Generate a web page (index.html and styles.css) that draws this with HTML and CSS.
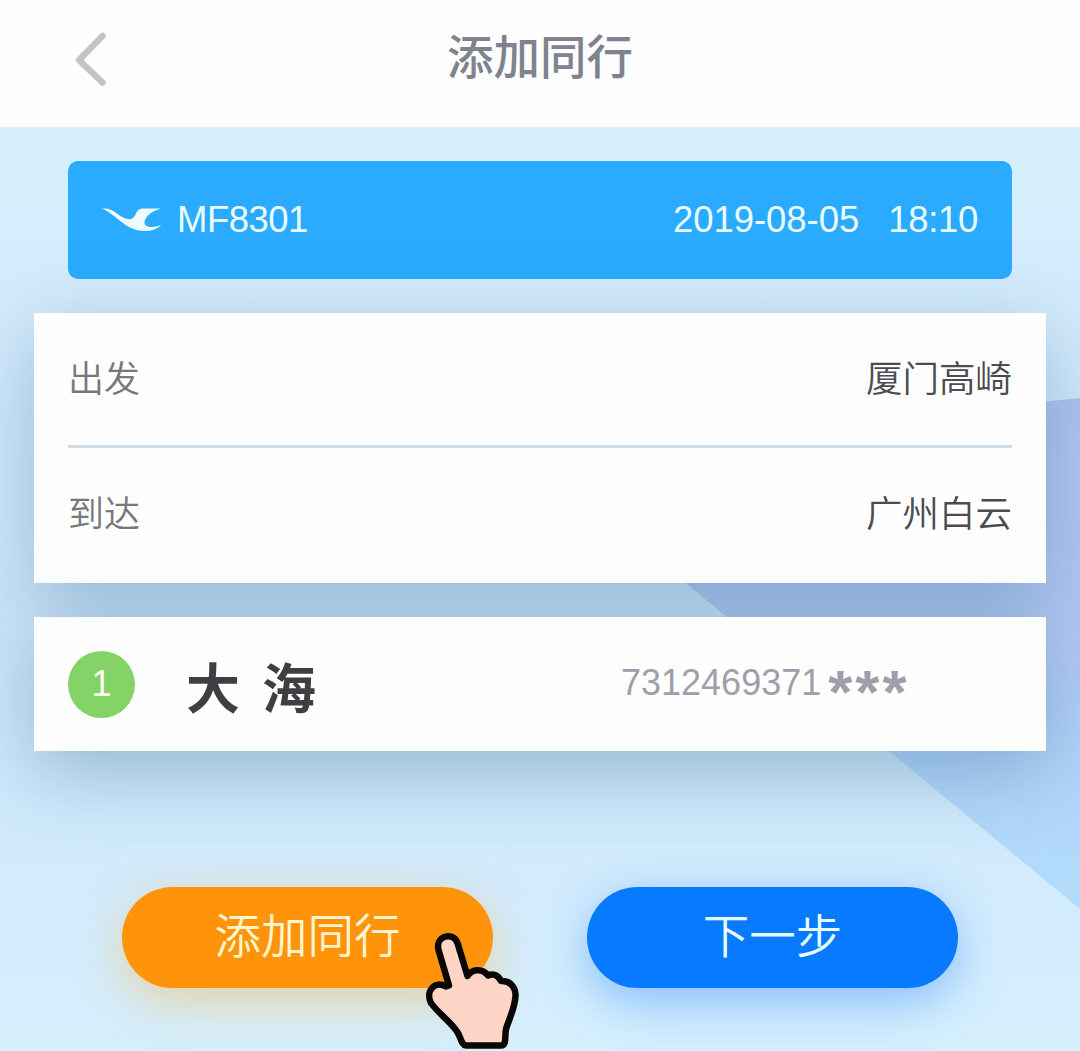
FILE: index.html
```html
<!DOCTYPE html>
<html lang="zh-CN">
<head>
<meta charset="utf-8">
<title>添加同行</title>
<link rel="stylesheet" href="styles.css">
</head>
<body>
<header class="topbar">
  <svg class="back" viewBox="0 0 34 56" width="34" height="56"><path d="M28.500 5 5 29 28.500 51.500" fill="none" stroke="#c4c4c5" stroke-width="6.500" stroke-linecap="round" stroke-linejoin="round"/></svg>
  <h1 class="title">添加同行</h1>
</header>
<main class="page">
  <svg class="backdrop" viewBox="0 0 1080 924" width="1080" height="924">
    <defs><linearGradient id="band" gradientUnits="userSpaceOnUse" x1="0" y1="271" x2="0" y2="780">
      <stop offset="0" stop-color="#b0c4ef"/><stop offset=".5" stop-color="#b1c9f3"/><stop offset=".72" stop-color="#b1d5f9"/><stop offset="1" stop-color="#b2dcfc"/>
    </linearGradient></defs>
    <path d="M1080 271Q780 300 600 386L682 453 890 625 1080 782Z" fill="url(#band)"/>
  </svg>
  <section class="flight">
    <svg class="bird" viewBox="0 0 60 26" width="60" height="26"><path d="M0 1.500C8 1 11 3.500 17 8C22 11.500 28 14 31.500 10.500C35 7 34 2 40 1.500H59C53 3.500 49 5 46 8.500C43 12 41 16 44 18.500C48 21 54 20 59 18C53 25 39 26 28 20.500C18 15.500 11 6 0 1.500Z" fill="#effcff"/></svg>
    <span class="number">MF8301</span>
    <span class="date">2019-08-05</span>
    <span class="time">18:10</span>
  </section>
  <section class="card route">
    <div class="row"><span class="label">出发</span><span class="value">厦门高崎</span></div>
    <div class="row"><span class="label">到达</span><span class="value">广州白云</span></div>
  </section>
  <section class="card passenger">
    <span class="badge">1</span>
    <span class="name">大海</span>
    <span class="ticket">7312469371<b class="mask">***</b></span>
  </section>
  <div class="actions">
    <button class="btn add">添加同行
      <svg class="hand" viewBox="0 0 104 121" width="104" height="121"><path d="M29 55.500 18.500 20C15 6 33 1 37.500 13L47.500 46C52 39 62 38 68 45.500C73 43 78 45 81 51C89 50 96 57 95.500 66C95 78 89 89 86 99C84.500 106 87 115.500 81 115.500H46C41 115 41 107 37 101.500C30 91 18 83 11 73C5 61 15 50 26 56.500Z" fill="#ffd5c8" stroke="#080706" stroke-width="6.500" stroke-linejoin="round"/></svg>
    </button>
    <button class="btn next">下一步</button>
  </div>
</main>
</body>
</html>
```
FILE: styles.css
```css
* { box-sizing: border-box; }
body {
  margin: 0;
  width: 1080px;
  height: 1051px;
  overflow: hidden;
  background: #d5effd;
  font-family: "Liberation Sans", "Noto Sans CJK SC", sans-serif;
}
.topbar {
  height: 127px;
  display: grid;
  grid-template-columns: 150px 1fr 150px;
  align-items: center;
  padding-bottom: 9px;
  background: #fefefe;
}
.back { margin-left: 74px; }
.title {
  margin: 0;
  text-align: center;
  font-size: 46.500px;
  line-height: 70px;
  font-weight: 500;
  color: #80828f;
  padding-bottom: 3px;
}
.page {
  position: relative;
  height: 924px;
  padding: 34px;
  background: linear-gradient(#d6f0fc 0, #d3eafd 23%, #cce5fb 60%, #d3ecfd 85%, #d5effd);
}
.backdrop { position: absolute; inset: 0; }
.flight {
  position: relative;
  display: flex;
  align-items: center;
  height: 118px;
  margin: 0 34px 34px;
  padding: 0 34px;
  border-radius: 10px;
  background: #2aabff;
  color: #e9fbff;
  font-size: 36.500px;
}
.bird { margin-right: 15px; }
.number { flex: 1; letter-spacing: -.5px; }
.date { margin-right: 29px; letter-spacing: -.05px; }
.time { letter-spacing: -.3px; }
.card {
  position: relative;
  background: #fefefe;
  box-shadow: 0 22px 76px rgba(57, 110, 145, .38);
}
.route { height: 270px; padding: 0 34px; margin-bottom: 34px; }
.row {
  display: flex;
  justify-content: space-between;
  align-items: center;
  height: 132px;
  padding-bottom: 5px;
  font-size: 36.500px;
}
.row + .row { height: 138px; border-top: 3px solid #cfdde7; padding-bottom: 8px; }
.label { color: #77787b; font-family: "Noto Sans CJK SC DemiLight", "Noto Sans CJK SC", sans-serif; font-weight: 350; font-size: 36px; padding-bottom: 2px; }
.value { color: #4b4c52; font-family: "Noto Sans CJK SC DemiLight", "Noto Sans CJK SC", sans-serif; font-weight: 350; }
.passenger {
  height: 134px;
  padding: 0 34px;
  display: flex;
  align-items: center;
}
.badge {
  width: 67px;
  height: 67px;
  border-radius: 50%;
  background: #84d366;
  color: #fbfff5;
  font-size: 36px;
  line-height: 66px;
  text-align: center;
}
.name {
  width: 434px;
  margin-left: 51px;
  padding-top: 3px;
  font-family: "Kaiti SC", STKaiti, KaiTi, "Noto Sans CJK SC", sans-serif;
  font-size: 54px;
  font-weight: 700;
  letter-spacing: 22px;
  color: #3e3f42;
}
.ticket { color: #9da0aa; font-size: 36px; line-height: 40px; padding-bottom: 2px; margin-left: 1px; display: flex; align-items: center; }
.mask { font-size: 62px; line-height: 40px; height: 40px; padding-top: 9px; margin-left: 7px; letter-spacing: 3px; }
.actions {
  position: relative;
  display: flex;
  justify-content: space-between;
  margin: 136px 88px 0;
}
.btn {
  position: relative;
  width: 371px;
  height: 101px;
  padding: 0 0 9px;
  border: 0;
  border-radius: 51px;
  font-family: "Noto Sans CJK SC DemiLight", "Noto Sans CJK SC", sans-serif;
  font-size: 46.500px;
  font-weight: 350;
  line-height: 70px;
}
.add { background: #ff940a; color: #fff5cf; box-shadow: 0 14px 48px rgba(255, 166, 20, .38); }
.next { background: #087aff; color: #e8fbff; box-shadow: 0 14px 48px rgba(24, 121, 255, .4); }
.hand { position: absolute; left: 298px; top: 43px; }
```
